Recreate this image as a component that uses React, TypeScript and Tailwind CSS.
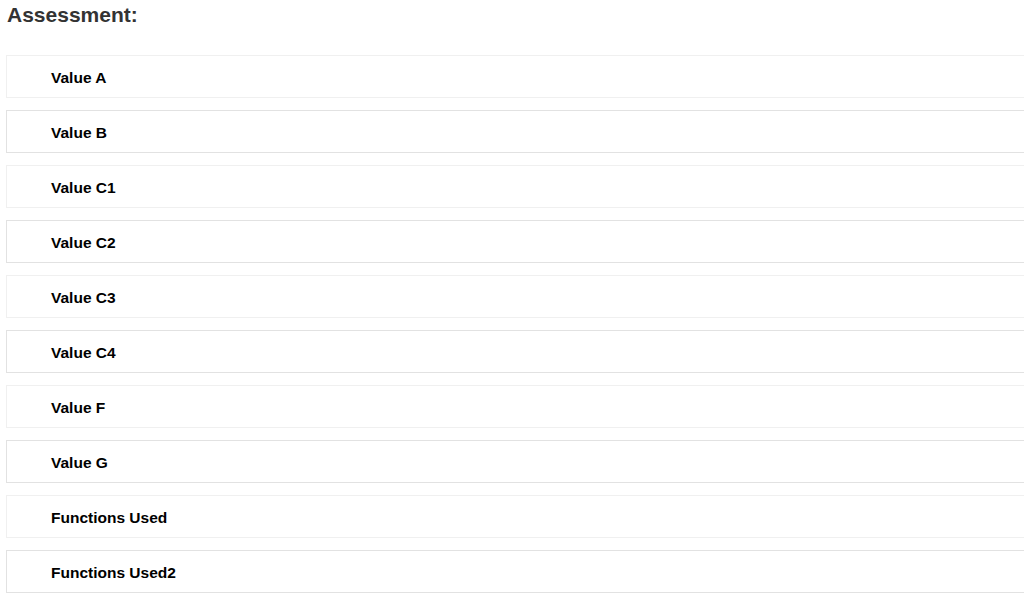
import React from 'react';

const rows = [
  'Value A',
  'Value B',
  'Value C1',
  'Value C2',
  'Value C3',
  'Value C4',
  'Value F',
  'Value G',
  'Functions Used',
  'Functions Used2',
];

export default function App() {
  return (
    <div className="w-[1024px] h-[608px] overflow-hidden bg-white font-['Liberation_Sans',Arial,sans-serif]">
      <h2 className="pt-[3px] pl-[7px] text-[21px] leading-[24px] font-bold text-[#333333]">Assessment:</h2>
      <div className="mt-[28px] ml-[6px] flex flex-col gap-[12px]">
        {rows.map((label, i) => (
          <div
            key={label}
            className={
              'w-[1040px] h-[43px] flex items-center pl-[44px] pt-[2px] border bg-white ' +
              (i % 2 === 0 ? 'border-[#f0f0f0]' : 'border-[#e2e2e2]')
            }
          >
            <span className="text-[15.5px] font-bold text-black">{label}</span>
          </div>
        ))}
      </div>
    </div>
  );
}
